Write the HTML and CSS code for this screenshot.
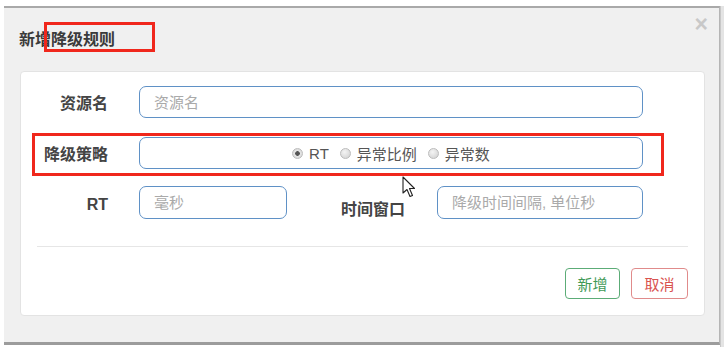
FILE: index.html
```html
<!DOCTYPE html>
<html lang="zh-CN">

<head>
  <meta charset="UTF-8">
  <meta name="viewport" content="width=device-width, initial-scale=1.0">
  <title>新增降级规则</title>
  <link rel="stylesheet" href="styles.css">
</head>

<body>

  <div class="stage">
    <div class="modal">
      <div class="modal-header">
        <span class="modal-title">新增降级规则</span>
        <span class="close">×</span>
      </div>

      <div class="panel">
        <div class="form-row">
          <label class="form-label">资源名</label>
          <div class="input input-full"><span class="placeholder">资源名</span></div>
        </div>

        <div class="form-row">
          <label class="form-label">降级策略</label>
          <div class="input input-full radio-group">
            <span class="radio checked"></span><span class="radio-text">RT</span>
            <span class="radio"></span><span class="radio-text">异常比例</span>
            <span class="radio"></span><span class="radio-text">异常数</span>
          </div>
        </div>

        <div class="form-row form-row-tall">
          <label class="form-label label-rt">RT</label>
          <div class="input input-small"><span class="placeholder">毫秒</span></div>
          <label class="form-label label-window">时间窗口</label>
          <div class="input input-medium"><span class="placeholder">降级时间间隔, 单位秒</span></div>
        </div>

        <div class="divider"></div>

        <div class="actions">
          <button class="btn btn-add">新增</button>
          <button class="btn btn-cancel">取消</button>
        </div>
      </div>
    </div>
    <div class="backdrop"></div>

    <!-- red annotation boxes -->
    <div class="mark mark-title"></div>
    <div class="mark mark-row"></div>

    <svg class="cursor" width="14" height="22" viewBox="0 0 14 22">
      <path d="M1 1 L1 17 L5 13.5 L8 20.5 L10.5 19.5 L7.5 12.5 L12.5 12.5 Z" fill="#fff" stroke="#222" stroke-width="1.1" stroke-linejoin="round"/>
    </svg>
  </div>

</body>

</html>
```

FILE: styles.css
```css
body {
  margin: 0;
  background-color: #fff;
  font-family: "Liberation Sans", "Noto Sans CJK SC", sans-serif;
  color: #333;
}

.stage {
  position: relative;
  display: flex;
  padding: 6px 0 0 4px;
  height: 341px;
}

.modal {
  width: 715px;
  height: 334px;
  background: #f0f0f0;
  border-top: 2px solid #a9a9a9;
  border-right: 1px solid #b5b5b5;
  border-bottom: 3px solid #9c9c9c;
}

.backdrop {
  flex: 1;
  background: #e4e4e4;
  border-left: 1px solid #c8c8c8;
}

.modal-header {
  display: flex;
  justify-content: space-between;
  align-items: flex-start;
  height: 63px;
  padding: 0 11px 0 15px;
}

.modal-title {
  margin-top: 18px;
  font-size: 16px;
  font-weight: bold;
  color: #3a3a3a;
}

.close {
  margin-top: 3px;
  font-size: 23px;
  font-weight: bold;
  color: #c8c8c8;
}

.panel {
  margin: 0 14px 0 16px;
  height: 213px;
  padding: 14px 16px 16px;
  background: #fff;
  border: 1px solid #e3e3e3;
  border-radius: 4px;
}

.form-row {
  display: flex;
  align-items: center;
  height: 32px;
  margin-bottom: 19px;
}

.form-row + .form-row {
  margin-bottom: 17px;
}

.form-row-tall {
  height: 33px;
}

.form-label {
  width: 71px;
  margin-right: 31px;
  text-align: right;
  font-size: 16px;
  font-weight: bold;
  color: #444;
}

.label-rt {
  padding-top: 4px;
}

.label-window {
  width: 118px;
  margin-right: 32px;
  padding-top: 11px;
}

.input {
  box-sizing: border-box;
  display: flex;
  align-items: center;
  height: 100%;
  padding: 0 14px;
  border: 1px solid #5f91c6;
  border-radius: 7px;
  font-size: 15px;
}

.input-full {
  width: 504px;
}

.input-small {
  width: 148px;
}

.input-medium {
  width: 206px;
}

.placeholder {
  color: #aaa;
  margin-top: -2px;
}

.radio-group {
  justify-content: center;
  color: #555;
}

.radio {
  box-sizing: border-box;
  width: 11px;
  height: 11px;
  margin-right: 6px;
  border: 1px solid #bcbcbc;
  border-radius: 50%;
  background: radial-gradient(circle at 40% 35%, #f4f4f4, #cfcfcf);
}

.radio.checked {
  background: radial-gradient(circle, #555 0, #555 2px, #e6e6e6 2.6px, #d0d0d0);
}

.radio-text {
  margin-right: 11px;
}

.radio-text:last-child {
  margin-right: 0;
}

.divider {
  margin-top: 27px;
  height: 1px;
  background: #e6e6e6;
}

.actions {
  display: flex;
  justify-content: flex-end;
  gap: 11px;
  margin-top: 21px;
}

.btn {
  box-sizing: border-box;
  height: 31px;
  padding: 0;
  background: #fff;
  border-radius: 4px;
  font-family: "Liberation Sans", "Noto Sans CJK SC", sans-serif;
  font-size: 15px;
  white-space: nowrap;
}

.btn-add {
  width: 55px;
  border: 1px solid #5cac77;
  color: #3f9a57;
}

.btn-cancel {
  width: 57px;
  border: 1px solid #e08b8b;
  color: #d9534f;
}

.mark {
  position: absolute;
  box-sizing: border-box;
  border: 3px solid #f0271c;
}

.mark-title {
  left: 44px;
  top: 22px;
  width: 111px;
  height: 30px;
}

.mark-row {
  left: 32px;
  top: 133px;
  width: 632px;
  height: 43px;
}

.cursor {
  position: absolute;
  left: 402px;
  top: 176px;
}
```
